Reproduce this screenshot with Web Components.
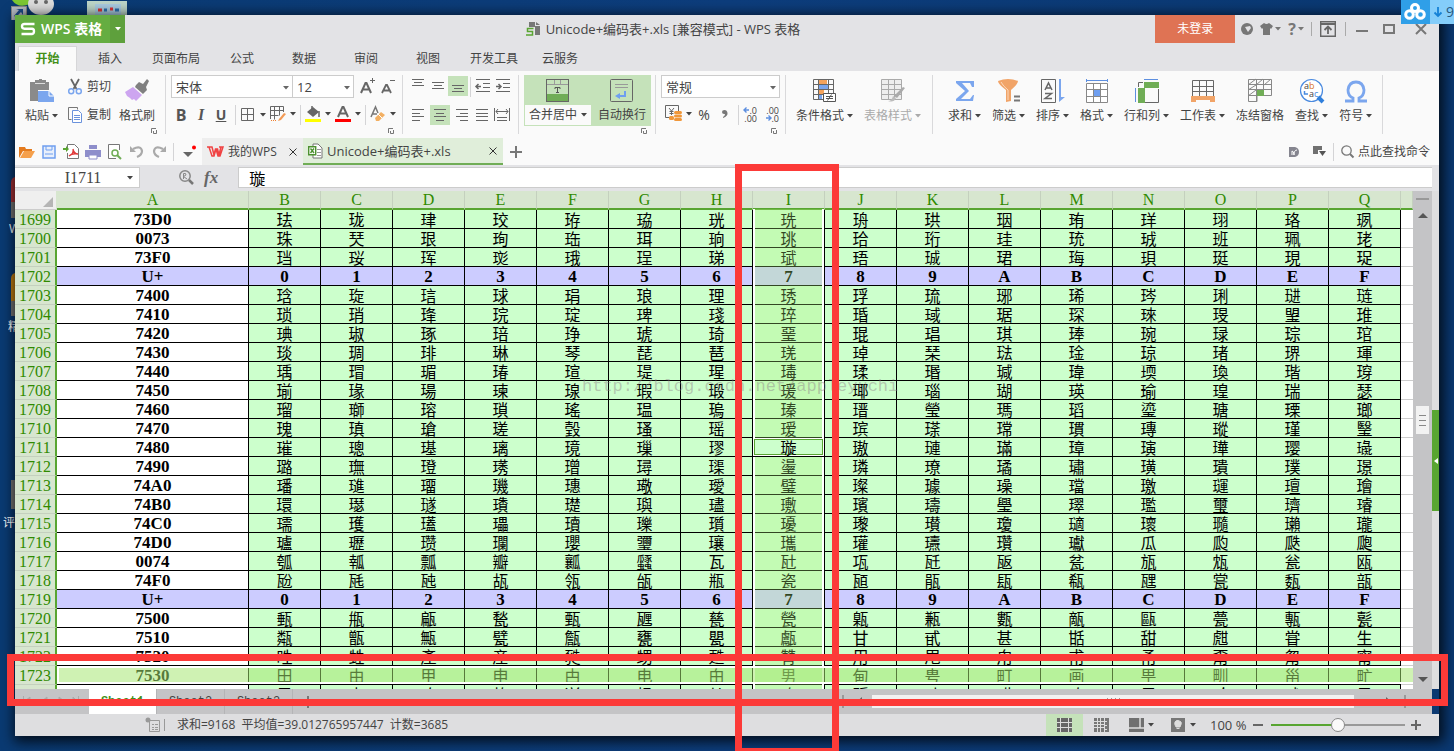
<!DOCTYPE html>
<html lang="zh-CN">
<head>
<meta charset="utf-8">
<title>Unicode+编码表+.xls [兼容模式] - WPS 表格</title>
<style>
html,body{margin:0;height:100%;overflow:hidden}
body{font:12px/16px "Open Sans","Noto Sans CJK SC",sans-serif;color:#444}
</style>
</head>
<body>
<wps-desktop></wps-desktop>
<script>
const base = `<style>
*{box-sizing:border-box}
button,input,select{font:inherit;color:inherit;background:none;border:0;margin:0;padding:0;border-radius:0;outline:0}
button{display:inline-flex;align-items:center;justify-content:center;white-space:nowrap}
select{appearance:none}
.sep{width:1px;background:#d4d4d6;flex:none}
</style>`;
function define(name, html, init) {
  const t = document.createElement('template');
  t.innerHTML = base + html;
  customElements.define(name, class extends HTMLElement {
    connectedCallback() {
      if (this.shadowRoot) return;
      const root = this.attachShadow({mode: 'open'});
      root.append(t.content.cloneNode(true));
      if (init) init(root, this);
    }
  });
}

/* ---- icons: [width, height, markup] ---- */
const lines = rows => rows.map(([x, y, w]) => `<path d="M${x} ${y}.5h${w}"/>`).join('');
const G = 'fill="none" stroke="#666"';
const I = {
  arrow: [6, 4, '<path d="M0 0h6L3 3.5z" fill="currentColor"/>'],
  launch: [6, 6, '<path d="M.5 5V.5H5M2.500 3v2.500H5.500V2" fill="none" stroke="#777"/>'],
  s: [14, 14, '<path d="M13.500 2H3.500Q1 2 1 4.300T3.500 6.700H11Q13 6.700 13 9.200T11 12H.5" fill="none" stroke="#fff" stroke-width="2.400"/>'],
  file: [14, 14, '<path d="M3 0h6v4h5v9H9V5H3z" fill="#777"/><path d="M10 0l4 3h-4z" fill="#777"/><rect y="5" width="8" height="9" fill="#e3e3e6"/><path d="M7.500 6.500H1.500v3h5v3.500H0" fill="none" stroke="#5aa532" stroke-width="1.500"/>'],
  paste: [24, 24, '<path d="M0 3h5V1h4V0h3v1h4v2h3v8H8v11H0z" fill="#8a8a8a"/><path d="M5 4.500h10" stroke="#ddd"/><path d="M8 12h11l5 5v6H8z" fill="#7ba6ee"/><path d="M19 12v5h5" fill="none" stroke="#fff"/>'],
  cut: [14, 16, '<path d="M3 0l5.500 10M11 0L5.500 10" stroke="#666" stroke-width="1.800"/><circle cx="3.200" cy="12.200" r="2.500" fill="none" stroke="#7ba6ee" stroke-width="1.500"/><circle cx="10.800" cy="12.200" r="2.500" fill="none" stroke="#7ba6ee" stroke-width="1.500"/>'],
  copy: [14, 16, '<path d="M.5.5h9v2M.5.5v12h3" fill="none" stroke="#777"/><path d="M4.500 3.500h6l3 3v9h-9z" fill="#fff" stroke="#6a92dc"/><path d="M6 8.500h6M6 10.500h6M6 12.500h6" stroke="#6a92dc"/>'],
  brush: [24, 24, '<path d="M11 6l3-3 4 2 4-5 2 2-3 6 1 3-4 4-8-7z" fill="#808080"/><path d="M8 8l9 8-6 6-2-2-2 1-2-2-3-2-2-4z" fill="#cda5f0"/>'],
  border: [14, 14, `<path d="M.5.5h12v12H.5zM6.500.5v12M.5 6.500h12" ${G}/>`],
  penborder: [16, 16, `<path d="M.5 13V.5h13V6M4.500.5v13M9.500.5v9M.5 4.500h13M.5 9.500h8" ${G}/><path d="M1 14.500h6" stroke="#f08030" stroke-dasharray="1 1"/><path d="M9 13l5-6 2 1-5 6-3 1z" fill="#f29a55"/>`],
  bucket: [16, 16, '<path d="M2 6l6-5 6 5-6 5z" fill="#666"/><path d="M7 0v4M14 5v6" stroke="#666" stroke-width="1.500"/><path d="M0 13h16v3H0z" fill="#ff0"/>'],
  acolor: [16, 16, '<path d="M3 11L7.500 1h1L13 11M5 7.500h6" fill="none" stroke="#666" stroke-width="2"/><path d="M0 13h16v3H0z" fill="#f00"/>'],
  eraser: [16, 16, '<path d="M1 11L5.500 1 8 7M3 8h4" fill="none" stroke="#777" stroke-width="1.500"/><path d="M5 12l6-6 4 3-6 6H6z" fill="#f3b063"/><path d="M8 8l4 4" stroke="#fff"/>'],
  aup: [16, 16, '<path d="M1 15L5.500 5h1L11 15M3 11.500h6" fill="none" stroke="#666" stroke-width="2"/><path d="M10 2.500h5M12.500 0v5" stroke="#666"/>'],
  adown: [16, 16, '<path d="M2 15L6 7h1l4 8M4 12.500h5" fill="none" stroke="#666" stroke-width="1.800"/><path d="M10 2.500h5" stroke="#666"/>'],
  top: [12, 14, `<g ${G}>${lines([[0,0,12],[2,3,8],[0,6,12]])}</g>`],
  mid: [12, 14, `<g ${G}>${lines([[0,3,12],[2,6,8],[0,9,12]])}</g>`],
  bot: [12, 14, `<g ${G}>${lines([[0,6,12],[2,9,8],[0,12,12]])}</g>`],
  left: [12, 14, `<g ${G}>${lines([[0,1,12],[0,5,8],[0,8,12],[0,12,8]])}</g>`],
  center: [12, 14, `<g ${G}>${lines([[0,1,12],[2,5,8],[0,8,12],[2,12,8]])}</g>`],
  right: [12, 14, `<g ${G}>${lines([[0,1,12],[4,5,8],[0,8,12],[4,12,8]])}</g>`],
  just: [12, 14, `<g ${G}>${lines([[0,1,12],[0,5,12],[0,8,12],[0,12,12]])}</g>`],
  dist: [16, 14, `<path d="M.5 0v13M15.500 0v13M2 3.500h12M4 1L2 3.500 4 6M12 1l2 2.500L12 6" ${G}/><path d="M3 9.500h10M3 12.500h10" ${G}/>`],
  outdent: [14, 14, `<g ${G}>${lines([[0,0,14],[7,4,7],[7,8,7],[0,12,14]])}</g><path d="M0 7.500h5M2.500 5L0 7.500 2.500 10" ${G} stroke-width="1.500"/>`],
  indent: [14, 14, `<g ${G}>${lines([[0,0,14],[7,4,7],[7,8,7],[0,12,14]])}</g><path d="M0 7.500h5M2.500 5L5 7.500 2.500 10" ${G} stroke-width="1.500"/>`],
  merge: [24, 24, '<rect x=".5" y=".5" width="22" height="22" fill="none" stroke="#666"/><path d="M1 5.500h21M8.500 1v5M14.500 1v5" stroke="#9a9a9a"/><path d="M1 15h21v7H1z" fill="#70ad56"/><path d="M9 10V8.500h5V10M11.500 9v4.500M10 13.500h3" fill="none" stroke="#555"/>'],
  wrap: [24, 24, '<rect x=".5" y=".5" width="22" height="22" rx="1" fill="none" stroke="#666"/><path d="M5 5.500h13M5 8.500h13" stroke="#999"/><path d="M15 12v5H8" fill="none" stroke="#6f9ff0" stroke-width="2"/><path d="M5 17l5-3v6z" fill="#6f9ff0"/>'],
  money: [17, 17, `<path d="M5 12.500H.5V.5h13V6" ${G}/><path d="M4 3l2.500 3L9 3M6.500 6v4M4.500 6.500h4M4.500 8.500h4" ${G}/><g fill="#f0973a"><rect x="9" y="6" width="8" height="3" rx="1.500"/><rect x="9" y="9.500" width="8" height="3" rx="1.500"/><rect x="9" y="13" width="8" height="3" rx="1.500"/><rect x="4" y="11" width="5" height="4" rx="1.500"/></g>`],
  comma: [6, 10, '<path d="M0 2q0-2 2.500-2T5.500 3 1 8V7q2-1 2-3Q0 4.500 0 2z" fill="#777"/>'],
  la: [5, 6, '<path d="M0 3h5M2.500.5L0 3l2.500 2.500" fill="none" stroke="#5d8fe0" stroke-width="1.400"/>'],
  ra: [5, 6, '<path d="M0 3h5M2.500.5L5 3 2.500 5.500" fill="none" stroke="#5d8fe0" stroke-width="1.400"/>'],
  cond: [24, 24, `<path d="M.5.5h20v20H.5zM5.500.5v20M15.500.5v20M.5 5.500h20M.5 10.500h20M.5 15.500h20" ${G}/><path d="M6 1h8v4H6zM6 11h5v4H6z" fill="#f5a35c"/><path d="M6 6h9v4H6zM6 16h3v4H6z" fill="#7ba6ee"/><path d="M10.500 14.500h12v8h-12z" fill="#fff" stroke="#555"/><path d="M13 17.500h7M13 19.500h7M18.500 15.500l-4 6" stroke="#555"/>`],
  tstyle: [24, 24, '<path d="M.5.5h20v20H.5z" fill="#eee" stroke="#aaa"/><path d="M.5 5.500h20M.5 10.500h20M.5 15.500h20M7.500.5v20M13.500.5v20" stroke="#aaa"/><path d="M13 17l9-9 2 1-8 10z" fill="#aaa"/><path d="M7 22q4 0 5-5l3 2q-2 5-8 3z" fill="#bbb"/>'],
  sum: [24, 24, '<path d="M3 2h18v6h-2l-2-4H9l7 8-8 8h9l3-4h1l-1 6H3v-2l9-8-9-8z" fill="#7ba6ee"/>'],
  filter: [24, 24, '<path d="M1 2q10-4 20 0 0 3-7 9v11l-5 1V11Q1 5 1 2z" fill="#f1a468"/><path d="M4 3q2 4 7 8v10" fill="none" stroke="#fbd9bd"/><path d="M17 17.500h6M17 21.500h6" stroke="#777" stroke-width="2"/>'],
  sort: [24, 24, `<path d="M.5.5h14v23H.5z" ${G}/><path d="M4 11l3.500-7L11 11M5 9h5M4 14.500h6.500L4 19.500h7" ${G} stroke-width="1.500"/><path d="M18 0v23l6-5h-4V0z" fill="#7ba6ee"/>`],
  format: [24, 24, `<path d="M1.500 4.500h21v19h-21zM8.500 4.500v19M15.500 4.500v19M1.500 10.500h21M1.500 17.500h21" fill="#fff" stroke="#888"/><path d="M9 11h6v6H9z" fill="#6f9ff0"/><path d="M1 1.500h22M1.500 0v3M22.500 0v3" stroke="#5d8fe0"/>`],
  rowcol: [24, 24, `<path d="M3.500 8V3.500H8M23.500 10v13.500H10" ${G}/><path d="M9 3h15v6H9zM3 9h7v15H3z" fill="#70ad56"/><path d="M9 .5h14M.5 9v14" stroke="#5d8fe0"/>`],
  sheet: [24, 24, `<path d="M1.500 1.500h21v18h-21zM8.500 1.500v18M15.500 1.500v18M1.500 7.500h21M1.500 12.500h21" ${G}/><path d="M0 17h24v6h-5v-2H5v2H0z" fill="#f1a468"/>`],
  freeze: [24, 24, `<path d="M.5.5h23v16H9v6H.5zM8.500.5v22M15.500.5v16M.5 5.500h23M.5 10.500h23M.5 16.500h9M8 0L0 6M15 0L8 6M23 0l-7 6M8 6l-8 5M8 11l-8 6" fill="none" stroke="#888"/><path d="M9 11h7v6H9z" fill="#70ad56"/>`],
  find: [24, 24, '<circle cx="11.500" cy="11.500" r="11" fill="#fff" stroke="#4a8adf" stroke-width="1.200"/><path d="M18 18l5 5" stroke="#2f7fdc" stroke-width="4"/><text x="4" y="10" font-size="9" fill="#444">a<tspan fill="#d9731f">b</tspan></text><text x="9" y="18" font-size="9" fill="#444">a<tspan fill="#4a8adf">c</tspan></text><path d="M4.500 12v3H8" fill="none" stroke="#4a8adf" stroke-width="1.500"/>'],
  omega: [24, 24, '<path d="M1 22h8v-3Q4 17 4 11q1-8 8-8t8 8q0 6-5 8v3h8" fill="none" stroke="#7ba6ee" stroke-width="2.800"/>'],
  open: [16, 14, '<path d="M0 13V2h6l1 2h6v2H4z" fill="#e47b1e"/><path d="M5 6h11l-4 7H1z" fill="#f5a04c"/>'],
  save: [14, 14, '<path d="M1 1h12v12H1z" fill="#e8effb" stroke="#6f9ff0" stroke-width="1.500"/><path d="M4 1v4h6V1M3 9h8" fill="none" stroke="#6f9ff0"/>'],
  pdf: [16, 16, '<path d="M4.500 9v5.500h11v-10l-4-4h-7V4" fill="#fff" stroke="#777"/><path d="M6 12q5-2 4-7 1 5 5 5-6-1-9 2z" fill="none" stroke="#e03a3a" stroke-width="1.300"/><path d="M0 4h3V2l3 3-3 3V6H0z" fill="#5aa532"/>'],
  print: [16, 16, '<path d="M4 1h8v4H4z" fill="#8e8ecb"/><path d="M0 6h16v7H0z" fill="#8e8ecb"/><path d="M4 11h8v4H4z" fill="#fff" stroke="#8e8ecb"/>'],
  preview: [16, 16, '<path d="M9 14.500H1.500V.5h11V6" fill="#fff" stroke="#777"/><circle cx="8" cy="9" r="3" fill="#fff" stroke="#70ad56" stroke-width="1.500"/><path d="M10 11l4 4" stroke="#70ad56" stroke-width="2"/>'],
  undo: [14, 14, '<path d="M3 4q8-4 9 2 0 4-5 6" fill="none" stroke="#aaa" stroke-width="2.200"/><path d="M0 7V1l6 6z" fill="#aaa"/>'],
  redo: [14, 14, '<path d="M11 4Q3 0 2 6q0 4 5 6" fill="none" stroke="#aaa" stroke-width="2.200"/><path d="M14 7V1L8 7z" fill="#aaa"/>'],
  more: [14, 14, '<path d="M0 7h10l-5 5z" fill="#666"/><circle cx="11" cy="2.500" r="2" fill="#f00"/>'],
  w: [16, 12, '<path d="M0 1h5l2 8 1.500-6h2L12 9l2-8M2 1l3 9h2L9 3M9 3l2 7h2l3-9h-4" fill="none" stroke="#f04343" stroke-width="1.500"/>'],
  xls: [14, 14, '<path d="M5 0h5l4 4v10H5z" fill="#fff" stroke="#777"/><path d="M9 5.500h4M9 8.500h4M9 11.500h4" stroke="#999"/><path d="M.7 2.700h7v8h-7z" fill="#fff" stroke="#4d9130" stroke-width="1.400"/><path d="M2.500 4.500l3.500 4.500M6 4.500L2.500 9" stroke="#4d9130" stroke-width="1.400"/>'],
  x: [8, 8, '<path d="M.5.5l7 7M7.500.5l-7 7" stroke="#333"/>'],
  plus: [12, 12, '<path d="M6 0v12M0 6h12" stroke="#777" stroke-width="2"/>'],
  d: [10, 10, '<path d="M0 0h6q4 1 4 5t-4 5H0z" fill="#85858f"/><path d="M3 8V4q2 0 2 4 0-5 3-5" fill="none" stroke="#fff"/>'],
  chat: [13, 11, '<path d="M0 0h9v4H5v4H0z" fill="#707070"/><path d="M6 5h7L9.500 10z" fill="#555"/>'],
  search: [13, 13, '<circle cx="5.500" cy="5.500" r="4.700" fill="none" stroke="#777" stroke-width="1.300"/><path d="M9 9l3.500 3.500" stroke="#777" stroke-width="2"/>'],
  rsearch: [15, 15, '<circle cx="6" cy="6" r="5.200" fill="none" stroke="#888" stroke-width="1.500"/><path d="M10 10l4 4" stroke="#777" stroke-width="2.500"/><path d="M4.500 9V3.500h2q2 1.500-2 3L8 9" fill="none" stroke="#888"/>'],
  aperture: [12, 12, '<circle cx="6" cy="6" r="6" fill="#777"/><path d="M4 4l5-1 1 2-3 4z" fill="#e3e3e6"/>'],
  shirt: [13, 12, '<path d="M0 3l4-3q2.500 2 5 0l4 3-2 3-1-1v7H3V5L2 6z" fill="#777"/>'],
  up: [16, 16, '<path d="M.7.7h14.600v14.600H.7z" fill="none" stroke="#666" stroke-width="1.400"/><path d="M1 3h14" stroke="#666" stroke-width="2"/><path d="M8 13V6M4.500 9L8 5.500 11.500 9" fill="none" stroke="#666" stroke-width="1.800"/>'],
  min: [12, 12, '<path d="M0 8h12" stroke="#777" stroke-width="2"/>'],
  max: [12, 12, '<path d="M1 2h10v8H1z" fill="none" stroke="#777" stroke-width="2"/>'],
  close: [12, 12, '<path d="M1 1l10 10M11 1L1 11" stroke="#777" stroke-width="2"/>'],
  baidu: [22, 18, '<g fill="none" stroke="#fff" stroke-width="3"><circle cx="11" cy="5" r="3.500"/><circle cx="5.500" cy="11.500" r="3.800"/><circle cx="16.500" cy="11.500" r="3.800"/></g>'],
  down: [8, 10, '<path d="M4 0v9M.5 5.500L4 9l3.500-3.500" fill="none" stroke="#1581d6" stroke-width="1.800"/>'],
  grid1: [15, 14, '<path d="M0 0h15v14H0z" fill="#666"/><path d="M0 4.500h15M0 9.500h15M3.500 0v14M11.500 0v14" stroke="#ddd"/>'],
  grid2: [15, 14, '<path d="M0 0h10v9H0z" fill="#777"/><path d="M0 3.500h10M0 6.500h10M3.500 0v9M6.500 0v9" stroke="#ddd"/><path d="M0 10h10v4H0zM11 0h4v14h-4z" fill="#777"/><path d="M3.500 10v4M6.500 10v4M11 3.500h2M11 7.500h2M11 11.500h2" stroke="#ddd"/>'],
  grid3: [15, 14, '<path d="M0 0h15v14H0z" fill="#707070"/><path d="M0 10h15M11 0v10" stroke="#ddd" stroke-width="1.500"/>'],
  bulb: [15, 14, '<path d="M0 0h14v14H0z" fill="#777"/><path d="M5 9Q3 6 4 4t3-1.500T10 4 9 9zM5.500 10.500h3" fill="#ddd" stroke="#ddd"/>'],
  macro: [15, 14, '<path d="M3.500 2.500h10v11h-10z" fill="none" stroke="#999"/><path d="M6 6.500h2M9 6.500h3M6 9.500h2M9 9.500h3M6 11.500h2M9 11.500h3" stroke="#999"/><circle cx="2" cy="2" r="2.500" fill="#999"/>'],
  nav: [56, 10, '<path d="M.5 0v10M7 1L2 5l5 4zM24 1l-5 4 5 4zM36 1l5 4-5 4zM50 1l4 4-4 4zM55.500 0v10" fill="#aaa" stroke="#aaa"/>']
};
customElements.define('wps-icon', class extends HTMLElement {
  connectedCallback() {
    if (this.shadowRoot) return;
    const name = this.getAttribute('name');
    const [w, h, m] = I[name];
    this.attachShadow({mode: 'open'}).innerHTML =
      `<style>:host{display:inline-flex;flex:none}svg{display:block;overflow:visible}</style><svg width="${w}" height="${h}" viewBox="0 0 ${w} ${h}" aria-hidden="true">${m}</svg>`;
  }
});

/* ---- title bar ---- */
define('title-bar', `<style>
:host{display:flex;height:28px;align-items:stretch;background:#e3e3e6;position:relative;color:#444}
.app{background:#65ad41;color:#fff;font-size:14px;font-weight:600;padding:0 8px 0 6px;gap:6px}
.drop{background:#5ea03c;color:#fff;width:15px}
.title{position:absolute;inset:0 178px 0 50px;display:flex;gap:6px;align-items:center;justify-content:center;font-size:13px;pointer-events:none}
.right{margin-left:auto;display:flex;align-items:center}
.login{background:#df7354;color:#fff;width:80px;align-self:stretch;margin-right:6px}
.g{gap:2px;margin-right:7px;color:#777}.q{font-size:16px;font-weight:bold}
.sep{height:14px;background:#aaa}
.win{margin-left:20px}
</style>
<button class="app"><wps-icon name="s"></wps-icon>WPS 表格</button><button class="drop" aria-label="菜单"><wps-icon name="arrow"></wps-icon></button>
<div class="title"><wps-icon name="file"></wps-icon><span>Unicode+编码表+.xls [兼容模式] - WPS 表格</span></div>
<div class="right"><button class="login">未登录</button>
<button class="g" aria-label="在线"><wps-icon name="aperture"></wps-icon></button>
<button class="g" aria-label="皮肤"><wps-icon name="shirt"></wps-icon><wps-icon name="arrow"></wps-icon></button>
<button class="g"><span class="q">?</span><wps-icon name="arrow"></wps-icon></button>
<span class="sep"></span><button style="margin:0 9px 0 8px" aria-label="功能区"><wps-icon name="up"></wps-icon></button><span class="sep"></span>
<button style="margin-left:10px" aria-label="最小化"><wps-icon name="min"></wps-icon></button><button class="win" style="margin-left:15px" aria-label="最大化"><wps-icon name="max"></wps-icon></button><button class="win" style="margin-right:12px" aria-label="关闭"><wps-icon name="close"></wps-icon></button></div>`);

define('menu-tabs', `<style>
:host{display:block;background:#e3e3e6;height:28px}
nav{display:flex;align-items:flex-end;height:100%}
button{min-width:62px;padding:0 11px;height:25px}
.on{min-width:59px;background:#fafafa;border:1px solid #d6d6d8;border-bottom:0;color:#449018;font-weight:bold;margin:0 2px 0 3px}
</style><nav><button class="on">开始</button><button>插入</button><button>页面布局</button><button>公式</button><button>数据</button><button>审阅</button><button>视图</button><button>开发工具</button><button>云服务</button></nav>`);

/* ---- ribbon ---- */
define('big-tool', `<style>
:host{display:block}
button{flex-direction:column;gap:5px}
.l{display:flex;align-items:center;gap:3px;height:16px}
.i{height:24px;display:flex}
:host([off]){color:#aaa}
</style><button><span class="i"></span><span class="l"><slot></slot></span></button>`, (r, el) => {
  r.querySelector('.i').innerHTML = `<wps-icon name="${el.getAttribute('icon')}"></wps-icon>`;
  if (el.hasAttribute('drop')) r.querySelector('.l').insertAdjacentHTML('beforeend', '<wps-icon name="arrow"></wps-icon>');
});
define('small-tool', `<style>
:host{display:block}
button{height:20px;min-width:20px;gap:4px}
.i{display:flex;justify-content:center;min-width:16px}
:host([on]) button{background:#c5e2ba}
</style><button><span class="i"></span><slot></slot></button>`, (r, el) => {
  r.querySelector('.i').innerHTML = `<wps-icon name="${el.getAttribute('icon')}"></wps-icon>`;
  if (el.hasAttribute('drop')) r.querySelector('button').insertAdjacentHTML('beforeend', '<wps-icon name="arrow"></wps-icon>');
});
define('tool-group', `<style>
:host{display:flex;flex-direction:column;border-right:1px solid #d9d9db;height:59px}
.b{display:flex;align-items:flex-start;height:51px}
.f{display:flex;justify-content:flex-end;height:8px;padding:2px 8px 0 0}
</style><div class="b"><slot></slot></div><div class="f"></div>`, (r, el) => {
  if (el.hasAttribute('launcher')) r.querySelector('.f').innerHTML = '<wps-icon name="launch"></wps-icon>';
});
define('ribbon-bar', `<style>
:host{display:flex;padding:4px 0;background:#fafafa}
.col{display:flex;flex-direction:column;gap:6px}
.row{display:flex;align-items:center;height:22px}
.gap{gap:4px}
.row .sep{height:20px}
.sel{position:relative;display:flex;border:1px solid #ccc;background:#fff;height:23px}
.sel select{width:100%;padding-left:4px;font-size:13px}
.sel wps-icon{position:absolute;right:3px;top:10px;pointer-events:none;color:#666}
.green{display:flex;background:#c5e2ba;height:51px}
.white{background:#fafafa;height:20px;padding:0 4px;display:flex;align-items:center;gap:4px}
.gb{flex-direction:column;gap:2px;padding:4px 1px 1px;color:#444}
.gb span{height:20px;display:flex;align-items:center}
.pair{gap:5px}.biu button{width:20px;font-weight:bold;font-size:16px;color:#555}
.dec{width:14px;flex-direction:column;font-size:9px;line-height:8px;align-items:stretch}
.dec span{display:flex;justify-content:flex-end}
</style>
<tool-group launcher style="width:151px"><div style="display:flex;padding:4px 0 0 10px;align-items:flex-start">
<big-tool icon="paste" drop>粘贴</big-tool>
<div class="col" style="margin:-3px 8px 0 10px"><button class="row pair"><wps-icon name="cut"></wps-icon>剪切</button><button class="row pair"><wps-icon name="copy"></wps-icon>复制</button></div>
<big-tool icon="brush">格式刷</big-tool></div></tool-group>
<tool-group launcher style="width:237px"><div class="col" style="padding-left:5px">
<div class="row" style="height:23px"><label class="sel" style="width:122px"><select aria-label="字体"><option>宋体</option></select><wps-icon name="arrow"></wps-icon></label><label class="sel" style="width:62px;margin-left:-1px"><select aria-label="字号"><option>12</option></select><wps-icon name="arrow"></wps-icon></label><small-tool icon="aup" style="margin-left:4px"></small-tool><small-tool icon="adown"></small-tool></div>
<div class="row gap"><span class="row biu"><button>B</button><button><i style="font-family:'Liberation Serif',serif">I</i></button><button style="font-size:14px"><u>U</u></button></span><span class="sep"></span><small-tool icon="border" drop></small-tool><small-tool icon="penborder" drop></small-tool><span class="sep"></span><small-tool icon="bucket" drop></small-tool><small-tool icon="acolor" drop></small-tool><span class="sep"></span><small-tool icon="eraser" drop></small-tool></div>
</div></tool-group>
<tool-group style="width:116px"><div class="col" style="padding-left:5px">
<div class="row" style="height:23px"><small-tool icon="top"></small-tool><small-tool icon="mid"></small-tool><small-tool icon="bot" on></small-tool><span class="sep" style="margin:0 2px"></span><small-tool icon="outdent"></small-tool><small-tool icon="indent"></small-tool></div>
<div class="row"><small-tool icon="left"></small-tool><small-tool icon="center" on style="margin:0 2px"></small-tool><small-tool icon="right"></small-tool><small-tool icon="just"></small-tool><small-tool icon="dist"></small-tool></div>
</div></tool-group>
<tool-group launcher style="width:137px"><div class="green" style="margin-left:5px"><button class="gb"><wps-icon name="merge"></wps-icon><span class="white">合并居中<wps-icon name="arrow"></wps-icon></span></button><button class="gb" style="padding:4px 5px 1px 6px"><wps-icon name="wrap"></wps-icon><span>自动换行</span></button></div></tool-group>
<tool-group launcher style="width:130px"><div class="col" style="padding-left:5px">
<label class="sel" style="width:119px"><select aria-label="数字格式"><option>常规</option></select><wps-icon name="arrow"></wps-icon></label>
<div class="row" style="padding-left:4px;gap:2px"><small-tool icon="money" drop></small-tool><button style="width:20px;font-size:14px">%</button><button style="width:18px" aria-label="千位分隔样式"><wps-icon name="comma"></wps-icon></button><span class="sep" style="margin:0 2px"></span><button class="dec"><span><wps-icon name="la"></wps-icon>.0</span><span>.00</span></button><button class="dec" style="margin-left:6px"><span>.00</span><span><wps-icon name="ra"></wps-icon>.0</span></button></div>
</div></tool-group>
<tool-group style="width:147px"><div style="display:flex;gap:11px;padding:4px 0 0 10px"><big-tool icon="cond" drop>条件格式</big-tool><big-tool icon="tstyle" drop off>表格样式</big-tool></div></tool-group>
<tool-group style="width:450px"><div style="display:flex;gap:11px;padding:4px 0 0 15px"><big-tool icon="sum" drop>求和</big-tool><big-tool icon="filter" drop>筛选</big-tool><big-tool icon="sort" drop>排序</big-tool><big-tool icon="format" drop>格式</big-tool><big-tool icon="rowcol" drop>行和列</big-tool><big-tool icon="sheet" drop>工作表</big-tool><big-tool icon="freeze">冻结窗格</big-tool><big-tool icon="find" drop>查找</big-tool><big-tool icon="omega" drop>符号</big-tool></div></tool-group>`);

define('doc-tabs', `<style>
:host{display:flex;height:27px;align-items:center;background:#fafafa}
.qa{display:flex;gap:2px;padding-left:2px}.qa button{width:20px;height:20px}
.sep{height:18px}
.tab{display:flex;align-items:center;align-self:stretch;gap:5px;padding:0 6px 0 5px;background:#eee}
.tab button{margin-left:auto}
.on{background:#e0eeda;border-bottom:2px solid #70ad56;font-size:13px}
.r{margin-left:auto;display:flex;align-items:center;gap:14px;padding-right:9px}
</style><div class="qa"></div><span class="sep" style="margin:0 4px"></span><button style="width:24px"><wps-icon name="more"></wps-icon></button>
<div class="tab" style="width:101px"><wps-icon name="w"></wps-icon><span>我的WPS</span><button aria-label="关闭"><wps-icon name="x"></wps-icon></button></div>
<div class="tab on" style="width:200px"><wps-icon name="xls"></wps-icon><span>Unicode+编码表+.xls</span><button aria-label="关闭"><wps-icon name="x"></wps-icon></button></div>
<button style="margin-left:7px" aria-label="新建"><wps-icon name="plus"></wps-icon></button>
<div class="r"><wps-icon name="d"></wps-icon><wps-icon name="chat"></wps-icon><span class="sep" style="margin:0 -7px"></span><button style="gap:4px"><wps-icon name="search"></wps-icon>点此查找命令</button></div>`, r => {
  r.querySelector('.qa').innerHTML = ['open','save','pdf','print','preview','undo','redo'].map(n => `<button aria-label="${n}"><wps-icon name="${n}"></wps-icon></button>`).join('');
});

define('formula-bar', `<style>
:host{display:flex;height:26px;padding:2px 7px 3px 0;background:#e3e3e6}
.name{display:flex;align-items:center;width:125px;border:1px solid #ccc;border-left:0;background:#fff;padding-right:6px}
.name input{flex:1;min-width:0;padding-left:24px;text-align:center;font:16px "Liberation Serif",serif}
.mid{display:flex;align-items:center;gap:10px;padding:0 20px 0 39px}
.fx{font:italic bold 17px/16px "Liberation Serif",serif;color:#666}
.val{flex:1;border:1px solid #ccc;border-right:0;background:#fff;padding-left:10px;font-size:16px;color:#000;min-width:0}
</style><div class="name"><input aria-label="名称框" value="I1711"><wps-icon name="arrow"></wps-icon></div>
<div class="mid"><wps-icon name="rsearch"></wps-icon><button class="fx">fx</button></div><input class="val" aria-label="编辑栏" value="璇">`);

/* ---- sheet: each row lists sixteen consecutive code points ---- */
define('sheet-grid', `<style>
:host{display:flex;flex:1;min-height:0;background:#dededf}
.area{flex:1;position:relative;overflow:hidden;background:#fff;min-width:0}
table{border-collapse:separate;border-spacing:0;table-layout:fixed;width:100%}
th,td{height:19px;padding:0;border-right:1px solid #000;border-bottom:1px solid #000;text-align:center;line-height:18px;font-size:16px;white-space:nowrap;color:#000}
td{background:#cfc;font-family:"Noto Sans CJK SC",sans-serif}
td.a{background:#fff}
td.a,.u td{font:bold 17px/16px "Liberation Serif",serif;padding-top:2px}
.u td,.u td.a{background:#ccf}
td.z,.u td.z{background:#fff;border-color:#ccc;border-right:0}
th{font:16px/17px "Liberation Serif",serif;color:#2f8a00;background:#d7e6cf}
thead th{border:0;border-right:1px solid #c4d0be;border-bottom:2px solid #58a531}
tbody th{border-right:2px solid #58a531;border-bottom:1px solid #c4d0be}
thead th:first-child{background:#efefef;border-color:#d7e6cf;border-bottom:1px solid #ccc}
.corner{width:0;height:0;margin:3px 3px 0 auto;border-left:10px solid transparent;border-bottom:10px solid #b5b5b5}
td.sel{position:relative;z-index:2;background:#fff}
.sel div{height:16px;line-height:14px;margin:1px;border:1px solid #58a531;background:#cfc}
.hc,.hr{position:absolute;border:2px solid #fff}
.hc{left:738px;width:71px;top:18px;bottom:0;background:rgba(172,242,120,.29);border-width:0 2px}
.hr{left:42px;right:0;top:475px;height:18px;background:rgba(165,230,112,.53);border-right:0}
.mark{position:absolute;left:567px;top:186px;font:17px/20px "Liberation Mono",monospace;color:rgba(140,125,135,.42);white-space:nowrap}
.sb{width:19px;background:#c4c4c6;display:flex;flex-direction:column;align-items:center;color:#555}
.sb i{display:block;width:13px}
.th{height:28px;background:#f2f2f2;flex-direction:column;gap:4px;justify-content:center;align-items:center}
.th b{width:7px;height:1px;background:#888}
.edge{width:7px;padding-top:219px}
.edge button{width:7px;height:101px;background:#58a531;color:#fff}
</style><div class="area"><table><colgroup></colgroup><thead></thead><tbody></tbody></table><div class="hc"></div><div class="hr"></div><div class="mark">http://blog.csdn.net/appleyuchi</div></div>
<div class="sb"><i style="height:2px;background:#999;margin:7px 0 13px"></i><svg width="10" height="5"><path d="M0 5h10L5 0z" fill="#555"/></svg><i class="th" style="margin-top:188px;display:flex"><b></b><b></b><b></b></i><svg width="10" height="5" style="margin:auto 0 7px"><path d="M0 0h10L5 5z" fill="#555"/></svg></div>
<div class="edge"><button aria-label="展开任务窗格"><svg width="4" height="6"><path d="M4 0v6L0 3z" fill="#fff"/></svg></button></div>`, r => {
  const q = s => r.querySelector(s);
  q('colgroup').innerHTML = '<col style="width:42px"><col style="width:192px">' + '<col style="width:72px">'.repeat(16) + '<col>';
  q('thead').innerHTML = '<tr><th><div class="corner"></div></th>' + [...'ABCDEFGHIJKLMNOPQ'].map(c => `<th>${c}</th>`).join('') + '<th></th></tr>';
  let code = 0x73D0, body = '';
  for (let n = 1699; n <= 1724; n++) {
    const head = n === 1702 || n === 1719;
    const label = head ? 'U+' : n === 1700 ? '0073' : n === 1717 ? '0074' : code.toString(16).toUpperCase();
    body += `<tr class="${head ? 'u' : ''}"><th>${n}</th><td class="a">${label}</td>`;
    for (let k = 0; k < 16; k++) {
      const sel = n === 1711 && k === 7;
      body += `<td${sel ? ' class="sel"' : ''}><div>${head ? k.toString(16).toUpperCase() : String.fromCodePoint(code + k)}</div></td>`;
    }
    body += '<td class="z"></td></tr>';
    if (!head) code += 16;
  }
  q('tbody').innerHTML = body;
});

define('sheet-tabs', `<style>
:host{display:flex;height:25px;margin-right:7px;background:#c4c4c6;align-items:center}
.nav{width:74px;padding-left:8px}
.t{width:68px;height:25px;border-right:1px solid #b4b4b6;font:12px "Liberation Mono",monospace}
.on{background:#fff;color:#449018;font-weight:bold}
.h{margin-left:auto;display:flex;align-items:center;width:590px;height:13px;color:#666}
.g{width:2px;height:13px;background:#999}
.bar{flex:1;height:13px;background:#f2f2f2;display:flex;justify-content:center;align-items:center;gap:3px}
.bar b{width:1px;height:8px;background:#999}
</style><div class="nav"><wps-icon name="nav"></wps-icon></div><button class="t on">Sheet1</button><button class="t">Sheet2</button><button class="t">Sheet3</button><button style="margin-left:9px" aria-label="新建工作表"><wps-icon name="plus"></wps-icon></button>
<div class="h"><span class="g"></span><svg width="28" height="9"><path d="M18 0v9l-5-4.500z" fill="#666"/></svg><div class="bar"><b></b><b></b><b></b><b></b></div><svg width="50" height="9"><path d="M32 0v9l5-4.500z" fill="#666"/></svg><span class="g"></span><span style="width:26px"></span></div>`);

define('status-bar', `<style>
:host{display:flex;height:22px;align-items:center;background:#dedee0;padding-left:131px;color:#444}
.sum{margin-left:12px;white-space:pre}
.r{margin-left:auto;display:flex;align-items:center;height:22px;padding-right:18px}
.r button{height:22px}
.d{gap:4px;width:42px}
input{appearance:none;width:134px;height:14px;margin:0 6px 0 8px}
input::-webkit-slider-runnable-track{height:2px;background:linear-gradient(90deg,#58a531 50%,#999 50%)}
input::-webkit-slider-thumb{appearance:none;width:14px;height:14px;margin-top:-6px;border-radius:50%;background:#fafafa;border:1px solid #888}
</style><wps-icon name="macro"></wps-icon><span class="sep" style="height:12px;margin-left:3px;background:#999"></span><span class="sum">求和=9168  平均值=39.012765957447  计数=3685</span>
<div class="r"><button style="width:37px;background:#c5e2ba" aria-label="普通视图"><wps-icon name="grid1"></wps-icon></button><button style="width:37px" aria-label="分页预览"><wps-icon name="grid2"></wps-icon></button><button class="d" aria-label="阅读模式"><wps-icon name="grid3"></wps-icon><wps-icon name="arrow"></wps-icon></button><button class="d" aria-label="护眼模式"><wps-icon name="bulb"></wps-icon><wps-icon name="arrow"></wps-icon></button><span style="width:49px;padding-left:6px;font-size:13px;white-space:nowrap">100 %</span>
<button aria-label="缩小"><svg width="10" height="2"><path d="M0 1h10" stroke="#666" stroke-width="2"/></svg></button><input type="range" aria-label="显示比例" value="50"><button aria-label="放大"><svg width="10" height="10"><path d="M0 5h10M5 0v10" stroke="#666" stroke-width="2"/></svg></button></div>`);

define('wps-desktop', `<style>
:host{display:block;position:relative;height:100vh;overflow:hidden;background:linear-gradient(90deg,#0a3a72,#0d3d7c 50%,#0a3871)}
.win{position:absolute;inset:15px;display:flex;flex-direction:column;box-shadow:2px 3px 12px 3px rgba(0,0,0,.75)}
.de{position:absolute;color:#fff}
.f{position:absolute;border:7px solid #fc3a38}
.bd{position:absolute;right:0;top:0;display:flex;height:24px;width:53px;background:#84cdfa;color:#27587f;font-size:14px;align-items:center;gap:4px}
.bd .b{background:#2f9fe8;width:29px;height:24px;display:flex;align-items:center;justify-content:center}
</style>
<svg class="de" width="130" height="20" style="left:0;top:0"><path d="M12 0q6 9 18 4V0z" fill="#7cc832"/><rect x="11.500" y="6.500" width="15" height="15" fill="#b8bcc4" stroke="#888"/><path d="M14 16l5-6-3-1h7v6l-2-3-5 5z" fill="#1e4e8c"/><ellipse cx="41" cy="4" rx="13" ry="11" fill="#dcdcdc"/><circle cx="36" cy="2" r="2" fill="#666"/><circle cx="46" cy="2" r="2" fill="#666"/><rect x="87" y="1" width="40" height="16" fill="#bcd5c8"/><rect x="95" y="4" width="26" height="12" fill="#a9cbe0"/><path d="M98 10h4M110 9h3" stroke="#d33" stroke-width="3"/><path d="M104 10h3M115 10h4" stroke="#2b6fae" stroke-width="3"/></svg>
<svg class="de" width="15" height="520" style="left:0;top:0"><path d="M15 177q-4 1-4 6v19h4z" fill="#a83238"/><path d="M15 273q-4 1-4 6v22h4z" fill="#c58014"/><path d="M11 202h4v16h-4zM11 301h4v15h-4zM11 480h4v29h-4z" fill="#777"/></svg>
<span class="de" style="left:9px;top:221px">W</span><span class="de" style="left:8px;top:319px">精</span><span class="de" style="left:3px;top:515px">评</span>
<div class="win"><title-bar></title-bar><menu-tabs></menu-tabs><ribbon-bar></ribbon-bar><doc-tabs></doc-tabs><formula-bar></formula-bar><sheet-grid></sheet-grid><sheet-tabs></sheet-tabs><status-bar></status-bar></div>
<div class="f" style="left:735px;width:104px;top:164px;bottom:-4px"></div><div class="f" style="left:7px;right:6px;top:654px;height:52px"></div>
<div class="bd"><span class="b"><wps-icon name="baidu"></wps-icon></span><wps-icon name="down"></wps-icon><span>9</span></div>`);
</script>
</body>
</html>
